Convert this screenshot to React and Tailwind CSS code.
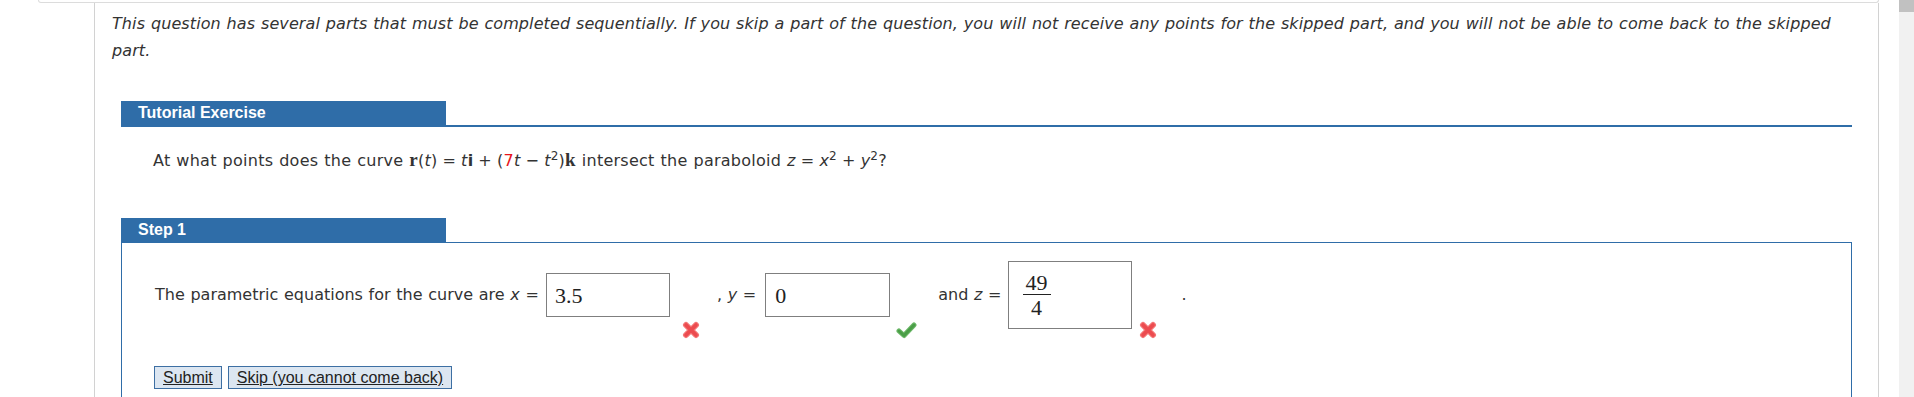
import React from 'react';

const XMark = () => (
    <svg width="18" height="18" viewBox="0 0 18 18" className="shrink-0 mt-[70px]">
        <path d="M4 4 L14 14 M14 4 L4 14" stroke="#f47676" strokeWidth="6" strokeLinecap="round" />
        <path d="M4 4 L14 14 M14 4 L4 14" stroke="#ec4b4f" strokeWidth="3.6" strokeLinecap="round" />
    </svg>
);

const CheckMark = () => (
    <svg width="21" height="17" viewBox="0 0 21 17" className="shrink-0 mt-[71px]">
        <path d="M3 9 L8 13.5 L18 3" stroke="#6cb868" strokeWidth="5" strokeLinecap="round" strokeLinejoin="round" fill="none" />
        <path d="M3 9 L8 13.5 L18 3" stroke="#4a9e47" strokeWidth="3" strokeLinecap="round" strokeLinejoin="round" fill="none" />
    </svg>
);

const Bar = ({ children }) => (
    <div className="w-[325px] h-[24px] bg-[#2f6da8] text-white font-bold text-[16px] leading-[24px] pl-[17px] font-['Liberation_Sans',Arial,sans-serif] [word-spacing:0px] tracking-normal">
        {children}
    </div>
);

const AnswerBox = ({ className, children }) => (
    <div className={`shrink-0 w-[124px] border border-[#7f7f7f] bg-white flex items-center font-['Liberation_Serif',serif] text-[22px] text-[#222] ${className}`}>
        {children}
    </div>
);

const App = () => {
    return (
        <div className="flex h-[397px] overflow-hidden bg-white text-[#333] font-['DejaVu_Sans',Verdana,sans-serif] tracking-[0.1px] [word-spacing:0.6px]">
            <div className="flex-1 min-w-0">
                <div className="ml-[38px] mr-[20px] h-[3px] border border-t-0 border-[#dcdcdc] rounded-b-[3px]" />

                <div className="ml-[94px] mr-[20px] h-[394px] border-x border-[#d2d2d2] pt-[7px]">
                    <p className="pl-[17px] pr-[40px] italic text-[16px] leading-[27px] text-[#333]">
                        This question has several parts that must be completed sequentially. If you skip a part of the question, you will not receive any points for the skipped part, and you will not be able to come back to the skipped part.
                    </p>

                    <div className="ml-[26px] w-[1731px] mt-[37px]">
                        <div className="border-b-2 border-[#2f6da8]">
                            <Bar>Tutorial Exercise</Bar>
                        </div>

                        <p className="mt-[21px] pl-[32px] text-[16px] leading-[24px] tracking-[0.25px]">
                            At what points does the curve{' '}
                            <b className="font-['Liberation_Serif',serif] text-[19px]">r</b>(<i>t</i>)
                            <span className="mx-[5px]">=</span><i>t</i><b>i</b>
                            <span className="mx-[5px]">+</span>(<span className="text-[#e8141b]">7</span><i>t</i>
                            <span className="mx-[5px]">−</span><i>t</i><sup>2</sup>)<b className="font-['Liberation_Serif',serif] text-[19px]">k</b> intersect the paraboloid <i>z</i>
                            <span className="mx-[5px]">=</span><i>x</i><sup>2</sup>
                            <span className="mx-[5px]">+</span><i>y</i><sup>2</sup>?
                        </p>

                        <div className="mt-[45px]">
                            <Bar>Step 1</Bar>
                            <div className="h-[200px] border border-b-0 border-[#2f6da8] pl-[33px] pt-[8px]">
                                <div className="flex items-center h-[88px] text-[16px] tracking-normal">
                                    <span className="shrink-0">
                                        The parametric equations for the curve are <i>x</i> =
                                    </span>
                                    <AnswerBox className="ml-[7px] h-[44px] pl-[8px]">3.5</AnswerBox>
                                    <span className="ml-[12px]"><XMark /></span>
                                    <span className="ml-[17px] shrink-0">, <i>y</i> =</span>
                                    <AnswerBox className="ml-[9px] w-[125px] h-[44px] pl-[9px]">0</AnswerBox>
                                    <span className="ml-[6px]"><CheckMark /></span>
                                    <span className="ml-[21px] shrink-0">and <i>z</i> =</span>
                                    <AnswerBox className="ml-[6px] h-[68px] pl-[14px]">
                                        <span className="flex flex-col items-center leading-[21px]">
                                            <span className="px-[3px]">49</span>
                                            <span className="w-[28px] border-t border-[#222] mt-[1px] mb-[2px]" />
                                            <span>4</span>
                                        </span>
                                    </AnswerBox>
                                    <span className="ml-[7px]"><XMark /></span>
                                    <span className="ml-[25px]">.</span>
                                </div>

                                <div className="flex gap-[6px] mt-[27px] -ml-[1px] font-['Liberation_Sans',Arial,sans-serif] text-[16px] text-[#222] tracking-normal [word-spacing:0px]">
                                    <button className="h-[23px] px-[8px] border border-[#3d6fa3] bg-[#dce6f1] leading-[21px] underline">
                                        Submit
                                    </button>
                                    <button className="h-[23px] px-[8px] border border-[#3d6fa3] bg-[#dce6f1] leading-[21px] underline">
                                        Skip (you cannot come back)
                                    </button>
                                </div>
                            </div>
                        </div>
                    </div>
                </div>
            </div>

            <div className="w-[15px] shrink-0 bg-[#f1f1f1]">
                <div className="h-[12px] bg-[#c1c1c1]" />
            </div>
        </div>
    );
};

export default App;
